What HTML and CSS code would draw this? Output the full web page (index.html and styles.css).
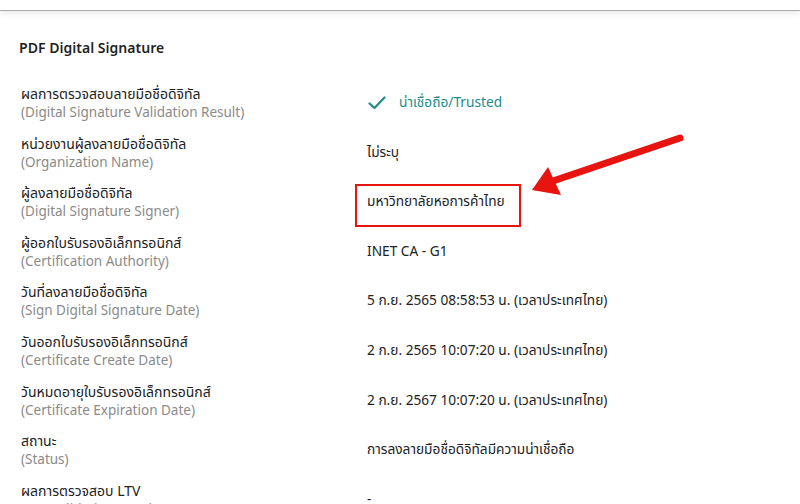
FILE: index.html
```html
<!DOCTYPE html>
<html>
<head>
    <title>PDF Digital Signature</title>
    <link rel="stylesheet" href="styles.css">
</head>
<body>
    <div class="topbar"></div>
    <div class="panel">
        <h2 class="title">PDF Digital Signature</h2>
        <div class="rows">
            <div class="row">
                <div class="label">ผลการตรวจสอบลายมือชื่อดิจิทัล<span>(Digital Signature Validation Result)</span></div>
                <div class="value trusted">
                    <svg class="check" width="18" height="14" viewBox="0 0 18 14"><path d="M1.5 7.5 L6.5 12 L16.5 1.5" fill="none" stroke="#1c8c8c" stroke-width="2.2" stroke-linecap="round" stroke-linejoin="round"/></svg>
                    น่าเชื่อถือ/Trusted
                </div>
            </div>
            <div class="row">
                <div class="label">หน่วยงานผู้ลงลายมือชื่อดิจิทัล<span>(Organization Name)</span></div>
                <div class="value">ไม่ระบุ</div>
            </div>
            <div class="row">
                <div class="label">ผู้ลงลายมือชื่อดิจิทัล<span>(Digital Signature Signer)</span></div>
                <div class="value"><span class="highlight">มหาวิทยาลัยหอการค้าไทย</span></div>
            </div>
            <div class="row">
                <div class="label">ผู้ออกใบรับรองอิเล็กทรอนิกส์<span>(Certification Authority)</span></div>
                <div class="value">INET CA - G1</div>
            </div>
            <div class="row">
                <div class="label">วันที่ลงลายมือชื่อดิจิทัล<span>(Sign Digital Signature Date)</span></div>
                <div class="value">5 ก.ย. 2565 08:58:53 น. (เวลาประเทศไทย)</div>
            </div>
            <div class="row">
                <div class="label">วันออกใบรับรองอิเล็กทรอนิกส์<span>(Certificate Create Date)</span></div>
                <div class="value">2 ก.ย. 2565 10:07:20 น. (เวลาประเทศไทย)</div>
            </div>
            <div class="row">
                <div class="label">วันหมดอายุใบรับรองอิเล็กทรอนิกส์<span>(Certificate Expiration Date)</span></div>
                <div class="value">2 ก.ย. 2567 10:07:20 น. (เวลาประเทศไทย)</div>
            </div>
            <div class="row">
                <div class="label">สถานะ<span>(Status)</span></div>
                <div class="value">การลงลายมือชื่อดิจิทัลมีความน่าเชื่อถือ</div>
            </div>
            <div class="row">
                <div class="label">ผลการตรวจสอบ LTV<span>(LTV Validation Result)</span></div>
                <div class="value">-</div>
            </div>
        </div>
    </div>

    <svg class="arrow" width="800" height="504" viewBox="0 0 800 504">
        <line x1="680" y1="138" x2="553" y2="181" stroke="#e8140f" stroke-width="7" stroke-linecap="round"/>
        <polygon points="532,190 548,167 561,195" fill="#e8140f"/>
    </svg>
</body>
</html>
```

FILE: styles.css
```css
body {
    margin: 0;
    background-color: #fff;
    font-family: "Noto Sans Thai", "Noto Sans", sans-serif;
    color: #222;
    overflow: hidden;
    height: 504px;
}

.topbar {
    height: 10px;
    border-bottom: 1px solid #a9a9a9;
    box-shadow: 0 3px 6px rgba(0,0,0,0.08);
}

.panel {
    padding: 28px 20px 0 19px;
}

.title {
    margin: 0 0 21px 0;
    font-size: 14px;
    font-weight: 600;
    line-height: 20px;
    color: #1f1f1f;
}

.rows {
    height: 426px;
    padding-top: 6px;
    box-sizing: border-box;
    overflow: hidden;
}

.row {
    display: grid;
    grid-template-columns: 346px 1fr;
    align-items: start;
    height: 49.6px;
    padding-left: 2px;
}

.label {
    display: flex;
    flex-direction: column;
    font-size: 14px;
    line-height: 18px;
}

.label span {
    color: #8a8a8a;
    font-size: 13.5px;
}

.value {
    font-size: 13.7px;
    line-height: 18px;
    margin-top: 8px;
    display: flex;
    align-items: center;
}

.trusted {
    color: #1c8c8c;
    gap: 13px;
}

.check {
    margin-left: 1px;
}

.highlight {
    border: 2px solid #e8140f;
    padding: 7px 14px 14px 10px;
    margin: -9px 0 0 -12px;
}

.arrow {
    position: absolute;
    left: 0;
    top: 0;
    pointer-events: none;
}
```
